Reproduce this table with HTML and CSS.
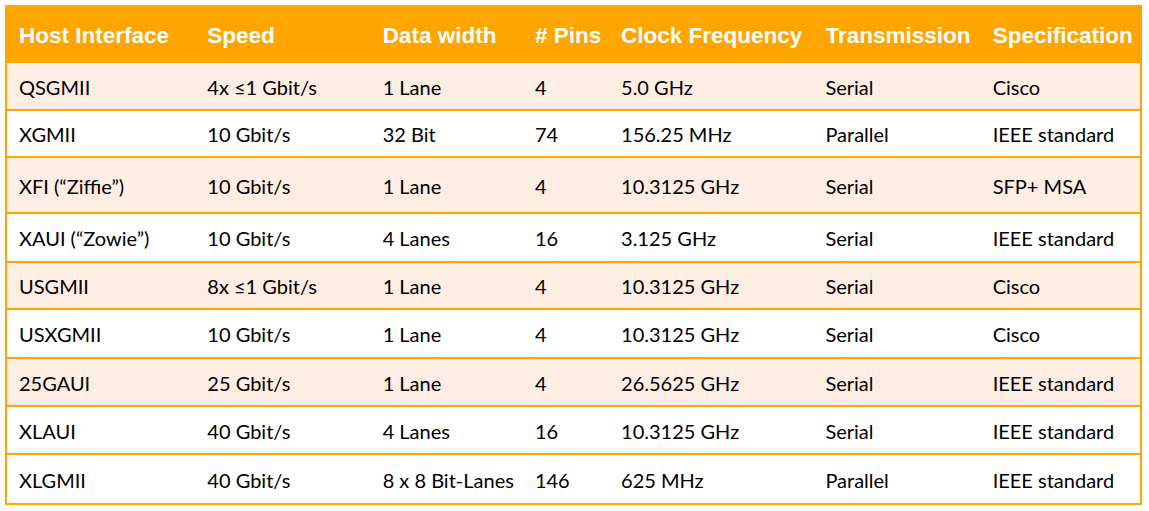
FILE: index.html
```html
<!DOCTYPE html>
<html>
<head>
<meta charset="utf-8">
<link rel="stylesheet" href="styles.css">
</head>
<body>
<table class="spec">
  <colgroup>
    <col class="c1"><col class="c2"><col class="c3"><col class="c4"><col class="c5"><col class="c6"><col class="c7">
  </colgroup>
  <thead>
    <tr class="head">
      <th>Host Interface</th><th>Speed</th><th>Data width</th><th># Pins</th><th>Clock Frequency</th><th>Transmission</th><th>Specification</th>
    </tr>
  </thead>
  <tbody>
    <tr class="tint h48"><td>QSGMII</td><td>4x ≤1 Gbit/s</td><td>1 Lane</td><td>4</td><td>5.0 GHz</td><td>Serial</td><td>Cisco</td></tr>
    <tr class="h47"><td>XGMII</td><td>10 Gbit/s</td><td>32 Bit</td><td>74</td><td>156.25 MHz</td><td>Parallel</td><td>IEEE standard</td></tr>
    <tr class="tint h56"><td>XFI (“Ziffie”)</td><td>10 Gbit/s</td><td>1 Lane</td><td>4</td><td>10.3125 GHz</td><td>Serial</td><td>SFP+ MSA</td></tr>
    <tr class="h49"><td>XAUI (“Zowie”)</td><td>10 Gbit/s</td><td>4 Lanes</td><td>16</td><td>3.125 GHz</td><td>Serial</td><td>IEEE standard</td></tr>
    <tr class="tint h47"><td>USGMII</td><td>8x ≤1 Gbit/s</td><td>1 Lane</td><td>4</td><td>10.3125 GHz</td><td>Serial</td><td>Cisco</td></tr>
    <tr class="h49"><td>USXGMII</td><td>10 Gbit/s</td><td>1 Lane</td><td>4</td><td>10.3125 GHz</td><td>Serial</td><td>Cisco</td></tr>
    <tr class="tint h48"><td>25GAUI</td><td>25 Gbit/s</td><td>1 Lane</td><td>4</td><td>26.5625 GHz</td><td>Serial</td><td>IEEE standard</td></tr>
    <tr class="h48"><td>XLAUI</td><td>40 Gbit/s</td><td>4 Lanes</td><td>16</td><td>10.3125 GHz</td><td>Serial</td><td>IEEE standard</td></tr>
    <tr class="h50 last"><td>XLGMII</td><td>40 Gbit/s</td><td>8 x 8 Bit-Lanes</td><td>146</td><td>625 MHz</td><td>Parallel</td><td>IEEE standard</td></tr>
  </tbody>
</table>
</body>
</html>
```

FILE: styles.css
```css
html, body {
  margin: 0;
  padding: 0;
  background: #ffffff;
}
body {
  padding: 5px 0 0 5px;
  font-family: Lato, "Open Sans", sans-serif;
  color: #000;
}
.spec {
  border-collapse: collapse;
  table-layout: fixed;
  width: 1137px;
  border: 2px solid #FFA500;
  font-size: 20px;
}
.c1 { width: 189px; }
.c2 { width: 175px; }
.c3 { width: 152px; }
.c4 { width: 86px; }
.c5 { width: 204px; }
.c6 { width: 167px; }
.c7 { width: 160px; }
.spec th, .spec td {
  padding: 1px 0 0 12px;
  text-align: left;
  white-space: nowrap;
  vertical-align: middle;
}
.spec th {
  background: #FFA500;
  color: #fff;
  font-family: "Liberation Sans", Arial, sans-serif;
  font-size: 22.5px;
  font-weight: 700;
  height: 50px;
  padding-top: 4px;
  padding-bottom: 0;
}
.spec td {
  border-top: 2px solid #FFA500;
  font-weight: 400;
}
.tint td { background: #FDEDE3; }
.h47 td { height: 44px; }
.h48 td { height: 45px; }
.h49 td { height: 46px; }
.h50 td { height: 47px; }
.h56 td { height: 53px; }
```
